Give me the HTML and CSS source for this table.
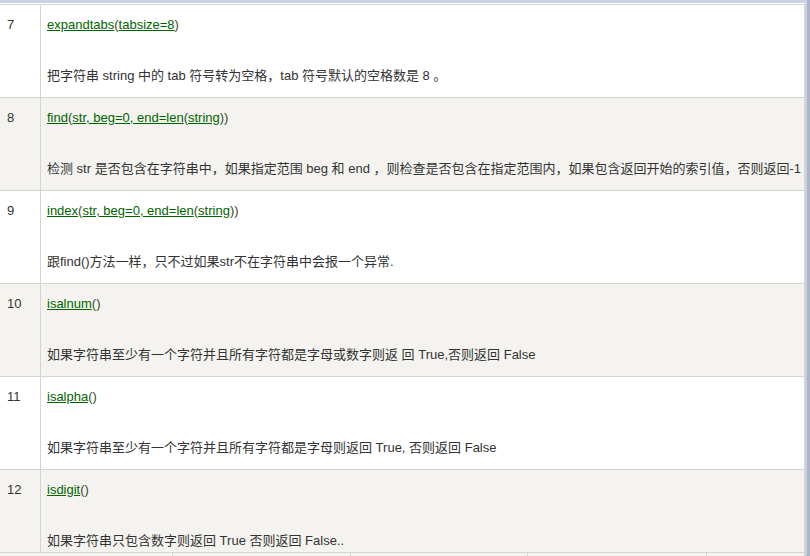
FILE: index.html
```html
<!DOCTYPE html>
<html lang="zh-CN">
<head>
    <meta charset="UTF-8">
    <title>Python 字符串方法</title>
    <link rel="stylesheet" href="styles.css">
</head>
<body>

    <div class="page">
        <table class="methods">
            <colgroup>
                <col class="col-num">
                <col>
            </colgroup>
            <tbody>
                <tr>
                    <td class="num">7</td>
                    <td>
                        <a href="#">expandtabs</a><span class="paren">(</span><a href="#">tabsize=8</a><span class="paren">)</span>
                        <p>把字符串 string 中的 tab 符号转为空格，tab 符号默认的空格数是 8 。</p>
                    </td>
                </tr>
                <tr class="alt">
                    <td class="num">8</td>
                    <td>
                        <a href="#">find</a><span class="paren">(</span><a href="#">str, beg=0, end=len</a><span class="paren">(</span><a href="#">string</a><span class="paren">))</span>
                        <p>检测 str 是否包含在字符串中，如果指定范围 beg 和 end ，则检查是否包含在指定范围内，如果包含返回开始的索引值，否则返回-1</p>
                    </td>
                </tr>
                <tr>
                    <td class="num">9</td>
                    <td>
                        <a href="#">index</a><span class="paren">(</span><a href="#">str, beg=0, end=len</a><span class="paren">(</span><a href="#">string</a><span class="paren">))</span>
                        <p>跟find()方法一样，只不过如果str不在字符串中会报一个异常.</p>
                    </td>
                </tr>
                <tr class="alt">
                    <td class="num">10</td>
                    <td>
                        <a href="#">isalnum</a><span class="paren">()</span>
                        <p>如果字符串至少有一个字符并且所有字符都是字母或数字则返 回 True,否则返回 False</p>
                    </td>
                </tr>
                <tr>
                    <td class="num">11</td>
                    <td>
                        <a href="#">isalpha</a><span class="paren">()</span>
                        <p>如果字符串至少有一个字符并且所有字符都是字母则返回 True, 否则返回 False</p>
                    </td>
                </tr>
                <tr class="alt last">
                    <td class="num">12</td>
                    <td>
                        <a href="#">isdigit</a><span class="paren">()</span>
                        <p>如果字符串只包含数字则返回 True 否则返回 False..</p>
                    </td>
                </tr>
            </tbody>
        </table>

        <!-- table suivante, à peine visible en bas -->
        <div class="next-table">
            <div class="cell w1"></div>
            <div class="cell w2"></div>
            <div class="cell w3"></div>
            <div class="cell w4"></div>
            <div class="cell"></div>
        </div>
    </div>

</body>
</html>
```

FILE: styles.css
```css
html, body {
    height: 100%;
}
body {
    margin: 0;
    background-color: #c9d1e3;
    border-right: 3px solid #abb6cd;
    box-sizing: border-box;
    overflow: hidden;
    font-family: "Liberation Sans", Arial, "Noto Sans CJK SC", sans-serif;
    font-size: 13px;
    color: #333;
}
.page {
    margin: 3px 2px 0 0;
    padding-top: 1px;
    background-color: #fff;
    height: 100%;
}
.methods {
    width: 805px;
    table-layout: fixed;
    border-collapse: separate;
    border-spacing: 0;
    border-top: 1px solid #d4d4d4;
}
.col-num {
    width: 41px;
}
.methods td {
    vertical-align: top;
    padding: 8px 6px 9px 6px;
    line-height: 24px;
    border-bottom: 1px solid #d4d4d4;
    border-right: 1px solid #d4d4d4;
}
.methods td.num {
    padding-left: 7px;
    padding-right: 0;
}
.methods tr.alt td {
    background-color: #f4f3ef;
}
.methods a {
    color: #006400;
    text-decoration: underline;
}
.paren {
    color: #3b4a1c;
}
.methods p {
    margin: 27px 0 0 0;
    white-space: nowrap;
}
.methods tr.last td {
    padding-bottom: 0;
    border-bottom: none;
}
.methods tr.last p {
    margin-top: 27px;
    line-height: 23px;
}
.next-table {
    display: flex;
    width: 805px;
    height: 20px;
    border-top: 1px solid #d4d4d4;
    background-color: #f4f3ef;
}
.next-table .cell {
    flex: 1;
    border-right: 1px solid #d4d4d4;
}
.next-table .w1 { flex: 0 0 172px; }
.next-table .w2 { flex: 0 0 177px; }
.next-table .w3 { flex: 0 0 176px; }
.next-table .w4 { flex: 0 0 178px; }
```
